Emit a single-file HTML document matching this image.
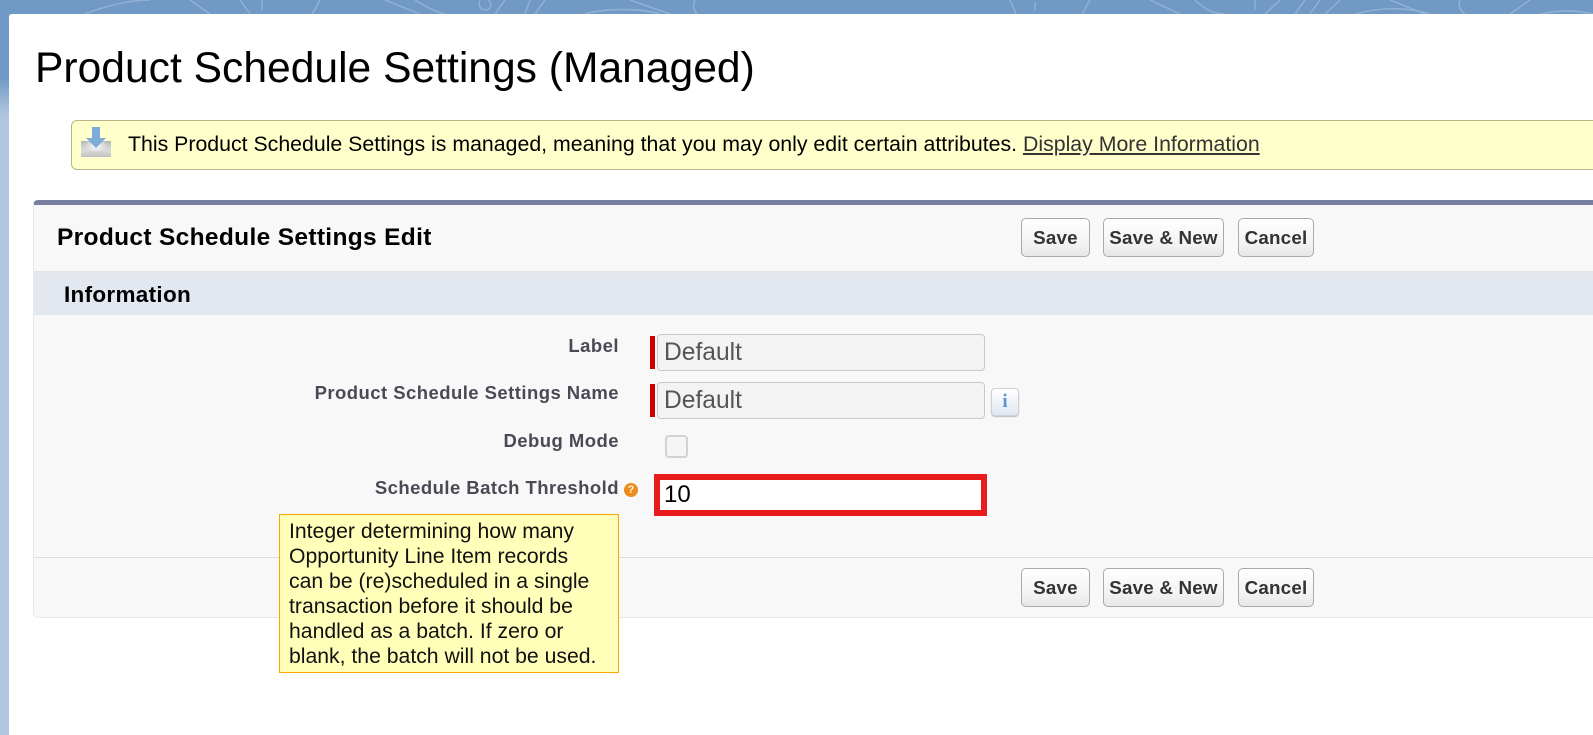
<!DOCTYPE html>
<html>
<head>
<meta charset="utf-8">
<style>
html,body{margin:0;padding:0;width:1593px;height:735px;overflow:hidden;background:#b0c6e0;font-family:"Liberation Sans",Arial,sans-serif}
.a{position:absolute}
#stage{position:absolute;left:0;top:0;width:1593px;height:735px;overflow:hidden}
.btn{position:absolute;height:37px;line-height:37px;text-align:center;border:1px solid #aaa;border-radius:5px;background:linear-gradient(#fff,#f2f2f2 70%,#e6e6e6);font-weight:bold;font-size:18.8px;letter-spacing:.2px;color:#333;box-sizing:content-box;white-space:nowrap}
.lbl{position:absolute;right:974px;font-weight:bold;font-size:18.5px;color:#4a4a56;white-space:nowrap;letter-spacing:.45px}
.inp{position:absolute;left:657px;width:326px;height:35px;border:1px solid #c8c8c8;border-radius:4px;background:#f3f3f3;color:#555;font-size:24.6px;line-height:36px;text-indent:6px}
.req{position:absolute;left:650px;width:5px;height:33px;background:#c00}
</style>
</head>
<body>
<div id="stage">
<div class="a" style="left:0;top:0;width:9px;height:115px;background:linear-gradient(#7199c5,#7199c5 68%,#b0c6e0)"></div>
<div class="a" style="left:0;top:0;width:1593px;height:14px;background:#7199c5"></div>
<svg class="a" style="left:0;top:0" width="1593" height="14" viewBox="0 0 1593 14" fill="none" stroke="#92b2d5" stroke-width="1.4">
<path d="M85 14C105 6 130 0 150 0"/><path d="M190 0L210 14"/><path d="M240 0L250 14"/><path d="M262 0V10"/><path d="M312 14C316 8 318 4 320 0"/>
<path d="M385 0L420 14"/><path d="M415 0C425 6 435 12 445 14"/><path d="M480 0C478 5 480 10 486 10C492 10 492 2 488 0"/><path d="M505 0L495 14"/><path d="M530 0L525 14"/><path d="M545 0L535 14"/>
<path d="M585 14C605 8 640 8 660 14"/><path d="M630 0L670 14"/><path d="M695 0C692 6 694 10 697 14"/><path d="M1010 0L1016 14"/><path d="M1035 2V10"/><path d="M1090 0L1082 14"/>
<path d="M1150 0L1180 14"/><path d="M1195 0C1205 10 1215 14 1225 14"/><path d="M1255 0V10"/><path d="M1280 0L1265 14"/><path d="M1305 0L1295 14"/><path d="M1320 0L1310 14"/>
<path d="M1340 0L1325 14"/><path d="M1355 14C1385 6 1410 8 1430 14"/><path d="M1390 0L1425 14"/><path d="M1460 0C1458 6 1460 10 1465 14"/><path d="M1530 0L1510 14"/><path d="M1540 14C1560 10 1575 10 1593 14"/>
</svg>

<div class="a" style="left:9px;top:14px;width:1600px;height:740px;background:#fff;border-radius:4px 0 0 0"></div>

<div class="a" style="left:35px;top:44px;font-size:42.6px;line-height:48px;color:#000;white-space:nowrap">Product Schedule Settings (Managed)</div>

<div class="a" style="left:71px;top:120px;width:1560px;height:48px;background:#ffffcc;border:1px solid #b8b585;border-radius:6px"></div>
<svg class="a" style="left:81px;top:127px" width="30" height="30" viewBox="0 0 30 30">
<defs>
<linearGradient id="t" x1="0" y1="0" x2="0" y2="1"><stop offset="0" stop-color="#b4b4b4"/><stop offset=".55" stop-color="#dcdcdc"/><stop offset="1" stop-color="#c0c0c0"/></linearGradient>
<radialGradient id="h" cx=".5" cy=".3" r=".5"><stop offset="0" stop-color="#ffffff"/><stop offset="1" stop-color="#ffffff" stop-opacity="0"/></radialGradient>
</defs>
<rect x="0" y="14" width="30" height="16" fill="url(#t)"/>
<rect x="3" y="14" width="24" height="14" fill="url(#h)"/>
<path d="M11 0H19V11H25L15 21L5 11H11Z" fill="#7fabd8"/>
</svg>
<div class="a" style="left:128px;top:130px;font-size:21.3px;line-height:28px;color:#000;white-space:nowrap">This Product Schedule Settings is managed, meaning that you may only edit certain attributes. <span style="color:#333;text-decoration:underline">Display More Information</span></div>

<div class="a" style="left:33px;top:200px;width:1600px;height:418px;background:#f8f8f8;border:1px solid #e8e8e8;border-top:5px solid #767f9d;border-radius:5px;box-sizing:border-box"></div>
<div class="a" style="left:34px;top:271px;width:1560px;height:2px;background:#e4e4e4"></div>
<div class="a" style="left:34px;top:273px;width:1560px;height:42px;background:#e3e7f0"></div>

<div class="a" style="left:57px;top:224px;font-size:24.5px;letter-spacing:.33px;line-height:28px;font-weight:bold;color:#000;white-space:nowrap">Product Schedule Settings Edit</div>
<div class="a" style="left:64px;top:280px;font-size:22.5px;letter-spacing:.3px;line-height:29px;font-weight:bold;color:#000;white-space:nowrap">Information</div>

<div class="btn" style="left:1021px;top:218px;width:67px">Save</div>
<div class="btn" style="left:1103px;top:218px;width:119px">Save &amp; New</div>
<div class="btn" style="left:1238px;top:218px;width:74px">Cancel</div>

<div class="lbl" style="top:335px">Label</div>
<div class="lbl" style="top:382px">Product Schedule Settings Name</div>
<div class="lbl" style="top:430px">Debug Mode</div>
<div class="lbl" style="top:477px">Schedule Batch Threshold</div>

<div class="req" style="top:336px"></div>
<div class="inp" style="top:334px">Default</div>
<div class="req" style="top:384px"></div>
<div class="inp" style="top:382px">Default</div>

<div class="a" style="left:991px;top:388px;width:26px;height:26px;border:1px solid #d0d0d0;border-radius:4px;background:linear-gradient(#fff,#dfe8f2);box-shadow:0 1px 1px #bbb;text-align:center;font:bold 19px/26px 'Liberation Serif',serif;color:#5e93cf">i</div>

<div class="a" style="left:665px;top:435px;width:19px;height:19px;border:2px solid #d2d2d2;border-radius:4px;background:#f5f5f5"></div>

<div class="a" style="left:624px;top:483px;width:14px;height:14px;border-radius:50%;background:#ec8c1c;color:#fff8e0;font:bold 11px/14px 'Liberation Sans',sans-serif;text-align:center">?</div>

<div class="a" style="left:654px;top:474px;width:321px;height:30px;border:6px solid #e81c1c;background:#fff;color:#000;font-size:24px;line-height:30px;text-indent:4px">10</div>

<div class="a" style="left:34px;top:557px;width:1560px;height:1px;background:#dcdcdc"></div>
<div class="btn" style="left:1021px;top:568px;width:67px">Save</div>
<div class="btn" style="left:1103px;top:568px;width:119px">Save &amp; New</div>
<div class="btn" style="left:1238px;top:568px;width:74px">Cancel</div>

<div class="a" style="left:279px;top:514px;width:338px;height:157px;border:1px solid #ffa500;background:#ffffb9;box-sizing:content-box"></div>
<div class="a" style="left:289px;top:519px;font-size:21.2px;line-height:25px;color:#111;white-space:nowrap">Integer determining how many<br>Opportunity Line Item records<br>can be (re)scheduled in a single<br>transaction before it should be<br>handled as a batch. If zero or<br>blank, the batch will not be used.</div>
</div>
</body>
</html>
